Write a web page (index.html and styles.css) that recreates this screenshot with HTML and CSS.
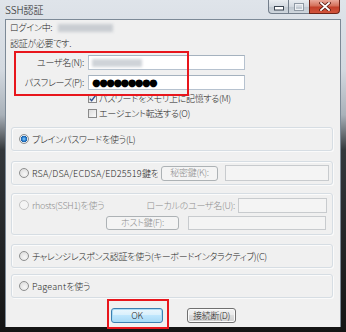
FILE: index.html
```html
<!DOCTYPE html>
<html lang="ja">
<head>
<meta charset="utf-8">
<title>SSH認証</title>
<link rel="stylesheet" href="styles.css">
</head>
<body>
<div class="window">
  <div class="titlebar">
    <span class="title">SSH認証</span>
    <div class="controls">
      <div class="ctl min"><svg width="10" height="5" viewBox="0 0 10 5"><rect x="0.5" y="0.5" width="9" height="3.5" fill="#fff" stroke="#3a4552"/></svg></div>
      <div class="ctl max"><svg width="10" height="8" viewBox="0 0 10 8"><rect x="0.5" y="0.5" width="9" height="7" fill="none" stroke="#8f99a4"/><rect x="1.5" y="1.5" width="7" height="5" fill="none" stroke="#eef1f4"/></svg></div>
      <div class="ctl close"><svg width="12" height="9" viewBox="0 0 12 9"><path d="M2 1 L10 8 M10 1 L2 8" stroke="#5a1a10" stroke-width="3.4" stroke-linecap="square"/><path d="M2 1 L10 8 M10 1 L2 8" stroke="#fff" stroke-width="1.8" stroke-linecap="square"/></svg></div>
    </div>
  </div>
  <div class="frame">
    <div class="client">
      <div class="info"><span>ログイン中:</span><span class="blur host"></span></div>
      <div class="info">認証が必要です.</div>

      <div class="field"><label class="flabel">ユーザ名(N):</label><div class="input"><span class="blur user"></span></div></div>
      <div class="field"><label class="flabel">パスフレーズ(P):</label><div class="input dots">●●●●●●●●●</div></div>

      <div class="check"><span class="cb"><svg width="9" height="9" viewBox="0 0 9 9"><path d="M1.8 4.6 L3.6 6.6 L7.4 1.8" fill="none" stroke="#2f4f8f" stroke-width="1.4"/></svg></span><span>パスワードをメモリ上に記憶する(M)</span></div>
      <div class="check"><span class="cb"></span><span>エージェント転送する(O)</span></div>

      <div class="group g1">
        <div class="row"><span class="radio sel"></span><span class="rlabel">プレインパスワードを使う(L)</span></div>
      </div>

      <div class="group g2">
        <div class="row"><span class="radio"></span><span class="rlabel clip"><span class="lat">RSA/DSA/ECDSA/ED25519</span>鍵を</span><span class="btn dis keybtn">秘密鍵(K):</span><span class="input dis keyin"></span></div>
      </div>

      <div class="group g3">
        <div class="row"><span class="radio dis"></span><span class="rlabel disabled rh">rhosts(SSH1)を使う</span><span class="disabled local">ローカルのユーザ名(U):</span><span class="input dis localin"></span></div>
        <div class="row row2"><span class="btn dis hostbtn">ホスト鍵(F):</span><span class="input dis hostin"></span></div>
      </div>

      <div class="group g4">
        <div class="row"><span class="radio"></span><span class="rlabel">チャレンジレスポンス認証を使う(キーボードインタラクティブ)(C)</span></div>
      </div>

      <div class="group g5">
        <div class="row"><span class="radio"></span><span class="rlabel"><span class="lat">Pageant</span>を使う</span></div>
      </div>

      <div class="buttons">
        <span class="btn ok">OK</span>
        <span class="btn cancel">接続断(D)</span>
      </div>
    </div>
  </div>
  <div class="mark mark-user"></div>
  <div class="mark mark-ok"></div>
</div>
</body>
</html>
```

FILE: styles.css
```css
* { box-sizing: border-box; margin: 0; padding: 0; }

body {
  margin: 0;
  width: 346px;
  height: 332px;
  overflow: hidden;
  font-family: "Noto Sans CJK JP", "Noto Sans", sans-serif;
  font-size: 9px;
  font-weight: 300;
  letter-spacing: -0.3px;
  font-feature-settings: "palt";
  color: #262626;
  background: #161616;
}

.window {
  position: relative;
  width: 346px;
  height: 332px;
  background: linear-gradient(180deg, #dfe4ea 0, #d3d9e0 70px, #a9b1b9 115px, #33373b 150px, #141414 100%);
}

/* title bar */
.titlebar {
  height: 19px;
  display: flex;
  align-items: flex-start;
}
.title {
  margin: 3px 0 0 5px;
  line-height: 13px;
  font-size: 10px;
  letter-spacing: 0;
  color: #222;
}
.controls {
  margin-left: auto;
  margin-right: 6px;
  display: flex;
}
.ctl {
  height: 14px;
  display: flex;
  align-items: center;
  justify-content: center;
  border: 1px solid #737e8b;
  border-top: none;
}
.min {
  width: 20px;
  border-right: none;
  border-bottom-left-radius: 4px;
  background: linear-gradient(180deg, #e9edf1 0, #d3d9e0 50%, #bfc7cf 51%, #cfd6dd 100%);
}
.min svg { margin-top: 4px; }
.max {
  width: 21px;
  border-right: none;
  background: linear-gradient(180deg, #e9edf1 0, #d3d9e0 50%, #bfc7cf 51%, #cfd6dd 100%);
}
.close {
  width: 31px;
  border-color: #6e2418;
  border-bottom-right-radius: 4px;
  background: linear-gradient(180deg, #e9a99b 0, #d4705a 45%, #c2402a 55%, #d2543c 100%);
}

/* frame and client */
.frame {
  display: flex;
  padding: 0 5px 5px 5px;
}
.client {
  width: 336px;
  height: 308px;
  background: #f0f0f0;
  border: 1px solid #7d8a97;
  border-bottom: none;
  padding-left: 4px;
  display: flex;
  flex-direction: column;
}

.info {
  height: 16px;
  line-height: 16px;
  display: flex;
  align-items: center;
}
.blur {
  display: inline-block;
  background: #c9cdd2;
  filter: blur(1.6px);
}
.host {
  width: 55px;
  height: 8px;
  margin-left: 6px;
}

/* login fields */
.field {
  display: flex;
  align-items: center;
  height: 15px;
  margin-top: 5px;
}
.info + .info + .field { margin-top: 3px; }
.flabel {
  width: 75px;
  text-align: right;
  padding-right: 1px;
  line-height: 15px;
  white-space: nowrap;
}
.input {
  display: flex;
  align-items: center;
  height: 15px;
  background: #fff;
  border: 1px solid #b6c2cf;
  border-top-color: #a5b2bf;
}
.field .input {
  width: 157px;
  margin-left: 3px;
  padding-left: 3px;
}
.user {
  width: 50px;
  height: 8px;
  background: #cfd3d8;
}
.dots {
  font-family: "DejaVu Sans", sans-serif;
  font-size: 10px;
  font-weight: 400;
  letter-spacing: -1.6px;
  color: #000;
  line-height: 13px;
}

/* checkboxes */
.check {
  display: flex;
  align-items: center;
  height: 15px;
  padding-left: 78px;
  white-space: nowrap;
}
.field + .check { margin-top: 1px; }
.cb {
  flex: none;
  width: 9px;
  height: 9px;
  margin-right: 2px;
  border: 1px solid #8a8a8a;
  background: linear-gradient(135deg, #dcdcdc 0, #fafafa 100%);
  display: flex;
  align-items: center;
  justify-content: center;
}
.cb svg { flex: none; }

/* group boxes */
.group {
  width: 322px;
  margin-left: 1px;
  border: 1px solid #d6dde3;
  border-radius: 3px;
  box-shadow: inset 1px 1px 0 #fbfbfb, 1px 1px 0 #fafafa;
  padding-left: 7px;
  display: flex;
  flex-direction: column;
  justify-content: center;
}
.g1 { height: 24px; margin-top: 6px; }
.g2 { height: 24px; margin-top: 10px; padding-right: 3px; }
.g3 { height: 42px; margin-top: 8px; justify-content: flex-start; padding-top: 3px; padding-right: 5px; }
.g4 { height: 24px; margin-top: 9px; }
.g5 { height: 24px; margin-top: 6px; }

.row {
  display: flex;
  align-items: center;
  height: 16px;
  white-space: nowrap;
}
.radio {
  flex: none;
  width: 10px;
  height: 10px;
  border-radius: 50%;
  border: 1px solid #8e8f8f;
  background: radial-gradient(circle at 60% 65%, #f7f7f7 0, #d7d7d7 100%);
  margin-right: 3px;
}
.radio.sel {
  background: radial-gradient(circle, #8fd3ff 0, #2a7fd0 35%, #1a5fa8 52%, #e9eef3 56%, #d7dde2 100%);
}
.radio.dis {
  border-color: #c3c3c3;
  background: #f4f4f4;
}
.rlabel { white-space: nowrap; }
.lat { letter-spacing: 0.2px; }
.clip {
  flex: none;
  width: 126px;
  overflow: hidden;
}
.disabled, .dis { color: #8d8d8d; }

.rh { flex: 1; }
.local {
  flex: none;
  text-align: right;
  padding-right: 3px;
}
.localin { flex: none; width: 89px; height: 15px; }
.row2 {
  margin-top: 3px;
  height: 14px;
  padding-left: 87px;
}
.hostbtn { flex: none; width: 73px; height: 14px; }
.hostin { flex: none; width: 138px; height: 14px; margin-left: 9px; }

.keybtn { flex: none; width: 57px; height: 15px; margin-left: 3px; }
.keyin { flex: none; width: 104px; height: 16px; margin-left: 7px; }

.input.dis {
  background: #f4f4f4;
  border: 1px solid #c8cbce;
}

/* buttons */
.btn {
  display: flex;
  align-items: center;
  justify-content: center;
  border: 1px solid #707070;
  border-radius: 3px;
  background: linear-gradient(180deg, #f2f2f2 0, #ebebeb 45%, #dddddd 50%, #cfcfcf 100%);
  box-shadow: inset 0 0 0 1px #fbfbfb;
  white-space: nowrap;
  line-height: 12px;
}
.btn.dis {
  border-color: #adb2b5;
  background: #f4f4f4;
  box-shadow: none;
}
.buttons {
  display: flex;
  margin-top: 10px;
  padding-left: 101px;
}
.ok {
  width: 52px;
  height: 15px;
  border-color: #3c7fb1;
  box-shadow: inset 0 0 0 1px #a9dcf5;
  background: linear-gradient(180deg, #eaf6fd 0, #d9f0fc 45%, #bee6fd 50%, #a7d9f5 100%);
}
.cancel {
  width: 49px;
  height: 15px;
  margin-left: 24px;
}

/* red annotation boxes drawn over the dialog */
.mark {
  position: absolute;
  border: 2px solid #e8161c;
}
.mark-user { left: 14px; top: 51px; width: 175px; height: 45px; }
.mark-ok { left: 107px; top: 299px; width: 62px; height: 30px; }
```
